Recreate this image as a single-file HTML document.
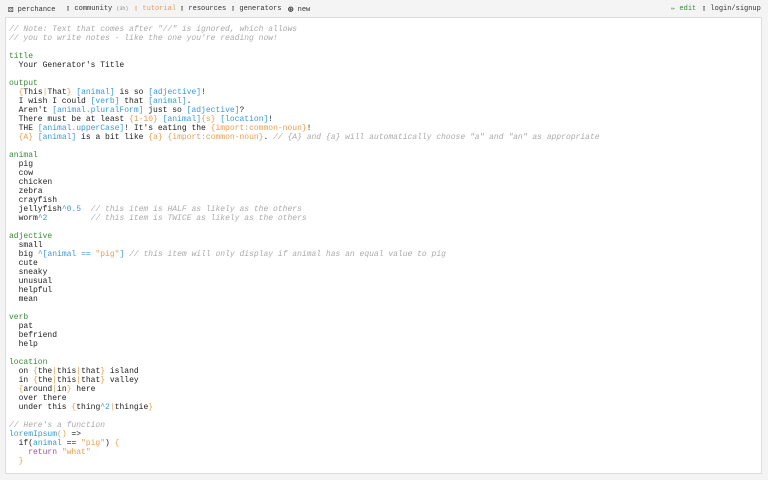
<!DOCTYPE html>
<html><head><meta charset="utf-8"><style>
body{margin:0;width:768px;height:480px;background:#f4f4f4;overflow:hidden;font-family:"Liberation Mono",monospace}
.top{position:absolute;left:0;top:0;width:768px;height:16px;font-size:7px;color:#333}
.top span{position:absolute;top:4px}
.ed{position:absolute;left:5px;top:17px;width:757px;height:457px;background:#fff;border:1px solid #ddd;box-sizing:border-box}
pre{margin:0;position:absolute;left:3px;top:7px;font:8px/9px "Liberation Mono",monospace;color:#222}
.k{color:#3a8a3a}.b{color:#3b9ad9}.o{color:#e8a050}.c{color:#aaa;font-style:italic}.p{color:#9a4fb8}.s{color:#e8a050}
</style></head><body>
<div class="top">
<span style="left:8px"><b style="font-size:9px;position:relative;top:1px">⚄</b> perchance</span>
<span style="left:66px">▯ community <small style="font-size:5px;color:#888">(3h)</small></span>
<span style="left:134px;color:#e8a050">▯ tutorial</span>
<span style="left:180px">▯ resources</span>
<span style="left:231px">▯ generators</span>
<span style="left:288px"><b style="font-size:9px;position:relative;top:1px">⊕</b> new</span>
<span style="left:671px;color:#3a8a3a">✏ edit</span>
<span style="left:702px">▯ login/signup</span>
</div>
<div class="ed"><pre><span class="c">// Note: Text that comes after "//" is ignored, which allows
// you to write notes - like the one you're reading now!</span>

<span class="k">title</span>
  Your Generator's Title

<span class="k">output</span>
  <span class="o">{</span>This<span class="o">|</span>That<span class="o">}</span> <span class="b">[animal]</span> is so <span class="b">[adjective]</span>!
  I wish I could <span class="b">[verb]</span> that <span class="b">[animal]</span>.
  Aren't <span class="b">[animal.pluralForm]</span> just so <span class="b">[adjective]</span>?
  There must be at least <span class="o">{1-10}</span> <span class="b">[animal]</span><span class="o">{s}</span> <span class="b">[location]</span>!
  THE <span class="b">[animal.upperCase]</span>! It's eating the <span class="o">{import:common-noun}</span>!
  <span class="o">{A}</span> <span class="b">[animal]</span> is a bit like <span class="o">{a}</span> <span class="o">{import:common-noun}</span>. <span class="c">// {A} and {a} will automatically choose "a" and "an" as appropriate</span>

<span class="k">animal</span>
  pig
  cow
  chicken
  zebra
  crayfish
  jellyfish<span class="b">^0.5</span>  <span class="c">// this item is HALF as likely as the others</span>
  worm<span class="b">^2</span>         <span class="c">// this item is TWICE as likely as the others</span>

<span class="k">adjective</span>
  small
  big <span class="b">^[animal ==</span> <span class="s">"pig"</span><span class="b">]</span> <span class="c">// this item will only display if animal has an equal value to pig</span>
  cute
  sneaky
  unusual
  helpful
  mean

<span class="k">verb</span>
  pat
  befriend
  help

<span class="k">location</span>
  on <span class="o">{</span>the<span class="o">|</span>this<span class="o">|</span>that<span class="o">}</span> island
  in <span class="o">{</span>the<span class="o">|</span>this<span class="o">|</span>that<span class="o">}</span> valley
  <span class="o">{</span>around<span class="o">|</span>in<span class="o">}</span> here
  over there
  under this <span class="o">{</span>thing<span class="b">^2</span><span class="o">|</span>thingie<span class="o">}</span>

<span class="c">// Here's a function</span>
<span class="b">loremIpsum</span><span class="o">()</span> =>
  if(<span class="b">animal</span> == <span class="s">"pig"</span>) <span class="o">{</span>
    <span class="p">return</span> <span class="s">"what"</span>
  <span class="o">}</span></pre></div>
</body></html>
